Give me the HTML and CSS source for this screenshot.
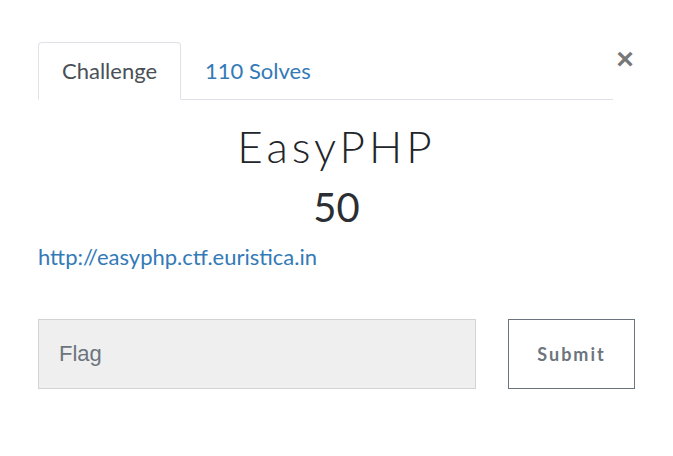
FILE: index.html
```html
<!DOCTYPE html>
<html>
<head>
<meta charset="utf-8">
<link rel="stylesheet" href="styles.css">
</head>
<body>
<div class="modal">
  <div class="header">
    <ul class="tabs">
      <li class="tab active">Challenge</li>
      <li class="tab link">110 Solves</li>
    </ul>
    <button class="close" type="button">&times;</button>
  </div>
  <h1 class="title">EasyPHP</h1>
  <div class="value">50</div>
  <a class="url" href="#">http://easyphp.ctf.euristica.in</a>
  <div class="form">
    <input class="flag" type="text" placeholder="Flag">
    <button class="submit" type="button">Submit</button>
  </div>
</div>
</body>
</html>
```
FILE: styles.css
```css
html, body {
  margin: 0;
  padding: 0;
  background: #fff;
}
.modal {
  width: 597px;
  padding: 42px 0 0 38px;
  font-family: Lato, "Liberation Sans", sans-serif;
}
.header {
  display: flex;
  align-items: flex-start;
}
.tabs {
  flex: 1;
  display: flex;
  margin: 0;
  padding: 0;
  list-style: none;
  border-bottom: 1px solid #dee2e6;
}
.tab {
  font-size: 22px;
  line-height: 31px;
  padding: 12px 23px 13px;
  margin-bottom: -1px;
  border: 1px solid transparent;
  border-radius: 4px 4px 0 0;
}
.tab.active {
  color: #495057;
  border-color: #dee2e6 #dee2e6 #fff;
  background: #fff;
}
.tab.link {
  color: #337ab7;
}
.close {
  width: 20px;
  margin: 2px 0 0 2px;
  padding: 0;
  border: 0;
  background: none;
  font-family: "Liberation Sans", sans-serif;
  font-size: 30px;
  font-weight: 700;
  line-height: 30px;
  color: #777;
}
.title {
  margin: 18px 0 0;
  text-align: center;
  font-weight: 300;
  font-size: 44px;
  line-height: 56px;
  letter-spacing: 4px;
  color: #212529;
}
.value {
  margin: 9px 0 0;
  text-align: center;
  font-size: 40px;
  font-weight: 400;
  line-height: 48px;
  color: #2b2f33;
}
.url {
  display: block;
  margin-top: 11px;
  font-size: 22px;
  line-height: 30px;
  color: #337ab7;
  text-decoration: none;
}
.form {
  display: flex;
  align-items: flex-start;
  gap: 32px;
  margin-top: 47px;
}
.flag {
  box-sizing: border-box;
  width: 438px;
  height: 70px;
  padding: 0 20px;
  border: 1px solid #d3d3d3;
  background: #efefef;
  font-family: "Liberation Sans", sans-serif;
  font-size: 22px;
  outline: none;
}
.flag::placeholder {
  color: #6c757d;
}
.submit {
  box-sizing: border-box;
  width: 127px;
  height: 70px;
  border: 1px solid #6c757d;
  background: #fff;
  font-family: Lato, sans-serif;
  font-size: 18px;
  font-weight: 700;
  letter-spacing: 2px;
  color: #6c757d;
}
```
